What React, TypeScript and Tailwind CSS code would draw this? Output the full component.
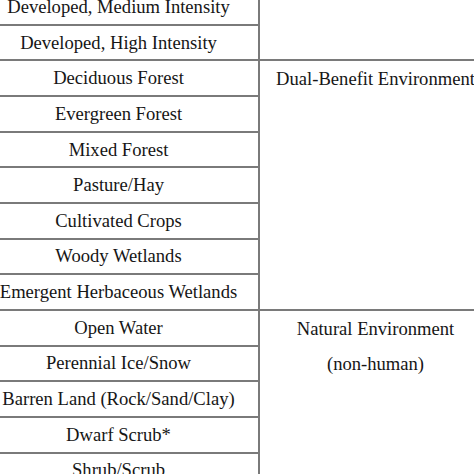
const groups: { rows: string[]; right: string[] }[] = [
  { rows: ["Developed, Medium Intensity", "Developed, High Intensity"], right: [] },
  {
    rows: [
      "Deciduous Forest",
      "Evergreen Forest",
      "Mixed Forest",
      "Pasture/Hay",
      "Cultivated Crops",
      "Woody Wetlands",
      "Emergent Herbaceous Wetlands",
    ],
    right: ["Dual-Benefit Environment"],
  },
  {
    rows: [
      "Open Water",
      "Perennial Ice/Snow",
      "Barren Land (Rock/Sand/Clay)",
      "Dwarf Scrub*",
      "Shrub/Scrub",
    ],
    right: ["Natural Environment", "(non-human)"],
  },
];

export default function App() {
  return (
    <div className="w-[474px] h-[474px] overflow-hidden bg-white text-[#161616] text-[18.6px] font-['Liberation_Serif','Times_New_Roman',serif]">
      <div className="ml-[-21px] mt-[-10px] w-[512px]">
        {groups.map((g, gi) => (
          <div key={gi} className="flex border-b-2 border-[#7a7a7a]">
            <div className="w-[281px] border-r-2 border-[#7a7a7a]">
              {g.rows.map((r, ri) => (
                <div
                  key={r}
                  className={
                    ri < g.rows.length - 1
                      ? "h-[35.67px] flex items-center justify-center whitespace-nowrap border-b-2 border-[#7a7a7a]"
                      : "h-[33.67px] flex items-center justify-center whitespace-nowrap"
                  }
                >
                  {r}
                </div>
              ))}
            </div>
            <div className="flex-1">
              {g.right.map((t) => (
                <div key={t} className="h-[35.67px] flex items-center justify-center whitespace-nowrap">
                  {t}
                </div>
              ))}
            </div>
          </div>
        ))}
      </div>
    </div>
  );
}
